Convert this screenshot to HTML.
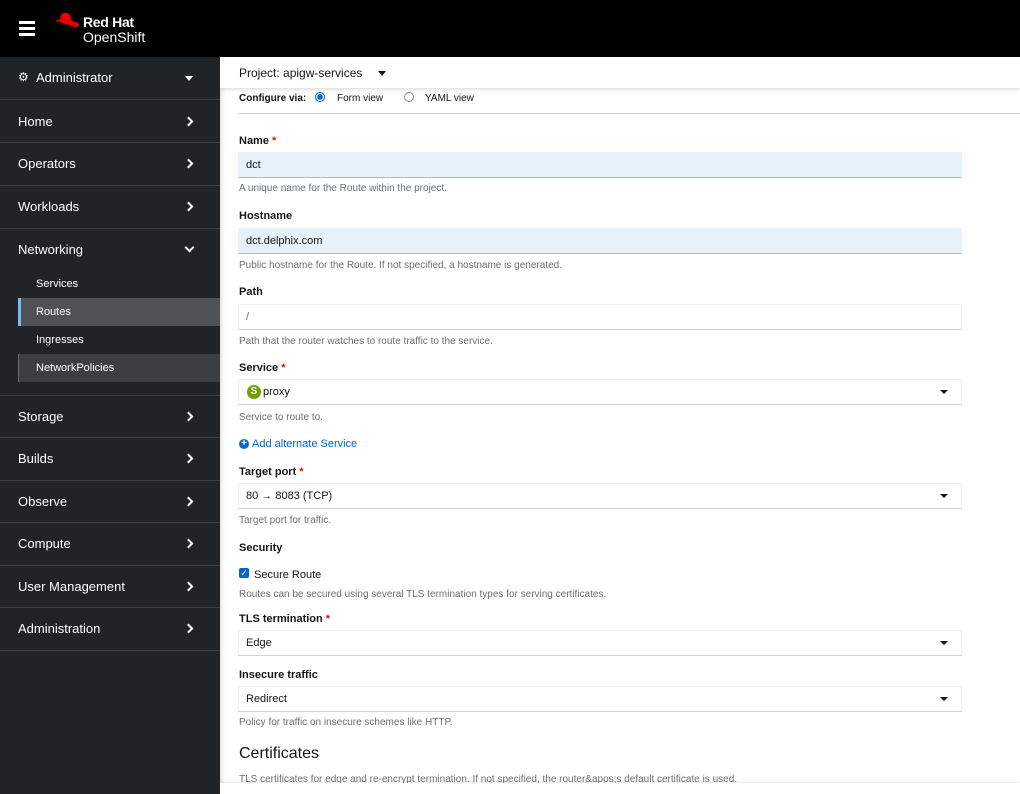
<!DOCTYPE html>
<html><head><meta charset="utf-8"><style>
*{box-sizing:border-box;margin:0;padding:0}
body{width:1020px;height:794px;overflow:hidden;font-family:"Liberation Sans",sans-serif;background:#fff;position:relative;color:#151515}
.top{position:absolute;left:0;top:0;width:1020px;height:57px;background:#000}
.side{position:absolute;left:0;top:57px;width:220px;height:737px;background:#212427}
.nav{position:absolute;left:0;width:220px;color:#fff;font-size:13px}
.nav span{position:absolute;left:18px}
.sep{position:absolute;left:0;width:220px;height:1px;background:#3c3f42}
.chev{position:absolute;left:185px;width:7px;height:7px;border-right:2px solid #fff;border-top:2px solid #fff;transform:rotate(45deg)}
.sub{position:absolute;left:18px;width:202px;height:28px;color:#fff;font-size:11px;line-height:28px;padding-left:18px}
.main{position:absolute;left:220px;top:57px;width:800px;height:737px;background:#fff;box-shadow:inset 4px 0 4px -2px rgba(0,0,0,.12)}
.t{position:absolute;font-size:11px}
.lbl{position:absolute;left:239px;font-size:11px;font-weight:bold}
.req{color:#c9190b}
.help{position:absolute;left:239px;font-size:10px;color:#6a6e73}
.in{position:absolute;left:238px;width:724px;height:26px;border:1px solid #f0f0f0;border-bottom-color:#d2d2d2;font-size:11px;line-height:24px;padding-left:7px}
.caret{position:absolute;right:13px;top:10px;border-left:4px solid transparent;border-right:4px solid transparent;border-top:4px solid #151515}
</style></head><body>
<div class="top">
  <div style="position:absolute;left:19px;top:21px;width:16px;height:3px;background:#fff;box-shadow:0 6px 0 #fff,0 12px 0 #fff"></div>
  <svg style="position:absolute;left:54px;top:12px" width="27" height="20" viewBox="0 0 27 20"><path d="M7 3C9 0 14 0 16 3L18 9C22 10 25 11 25 13C25 15 20 16 14 14C8 12 2 11 2 9C2 8 4 7 6 8L7 3Z" fill="#e00"/><path d="M3 9C6 11 14 14 20 14" stroke="#000" stroke-width="1.2" fill="none"/></svg>
  <div style="position:absolute;left:83px;top:14px;color:#fff;font-size:14px;font-weight:bold;letter-spacing:-.3px">Red Hat</div>
  <div style="position:absolute;left:83px;top:29px;color:#fff;font-size:14px">OpenShift</div>
</div>
<div class="side"></div>
<div class="nav" style="top:70px"><span style="left:18px;font-size:12px">⚙</span><span style="left:36px">Administrator</span><div style="position:absolute;left:185px;top:6px;border-left:4px solid transparent;border-right:4px solid transparent;border-top:5px solid #fff"></div></div>
<div class="sep" style="top:99px"></div>
<div class="nav" style="top:114px"><span>Home</span><div class="chev" style="top:4px"></div></div>
<div class="sep" style="top:142px"></div>
<div class="nav" style="top:156px"><span>Operators</span><div class="chev" style="top:4px"></div></div>
<div class="sep" style="top:185px"></div>
<div class="nav" style="top:199px"><span>Workloads</span><div class="chev" style="top:4px"></div></div>
<div class="sep" style="top:228px"></div>
<div class="nav" style="top:242px"><span>Networking</span><div class="chev" style="top:2px;left:186px;transform:rotate(135deg)"></div></div>
<div class="sub" style="top:270px">Services</div>
<div class="sub" style="top:298px;background:#4f5255;border-left:3px solid #73bcf7;padding-left:15px">Routes</div>
<div class="sub" style="top:326px">Ingresses</div>
<div class="sub" style="top:354px;background:#3c3f42;border-left:1px solid #6a6e73;padding-left:17px">NetworkPolicies</div>
<div class="sep" style="top:395px"></div>
<div class="nav" style="top:409px"><span>Storage</span><div class="chev" style="top:4px"></div></div>
<div class="sep" style="top:437px"></div>
<div class="nav" style="top:451px"><span>Builds</span><div class="chev" style="top:4px"></div></div>
<div class="sep" style="top:480px"></div>
<div class="nav" style="top:494px"><span>Observe</span><div class="chev" style="top:4px"></div></div>
<div class="sep" style="top:522px"></div>
<div class="nav" style="top:536px"><span>Compute</span><div class="chev" style="top:4px"></div></div>
<div class="sep" style="top:565px"></div>
<div class="nav" style="top:579px"><span>User Management</span><div class="chev" style="top:4px"></div></div>
<div class="sep" style="top:607px"></div>
<div class="nav" style="top:621px"><span>Administration</span><div class="chev" style="top:4px"></div></div>
<div class="sep" style="top:650px"></div>

<div class="main"></div>
<div style="position:absolute;left:220px;top:57px;width:800px;height:31px;background:#fff;box-shadow:0 2px 3px rgba(0,0,0,.12)"></div>
<div class="t" style="left:239px;top:66px;font-size:12px">Project: apigw-services</div>
<div style="position:absolute;left:378px;top:71px;border-left:4px solid transparent;border-right:4px solid transparent;border-top:5px solid #151515"></div>
<div class="t" style="left:239px;top:93px;font-size:10px;font-weight:bold">Configure via:</div>
<div style="position:absolute;left:315px;top:92px;width:10px;height:10px;border-radius:50%;border:1px solid #06c;background:radial-gradient(#06c 2.5px,#fff 3px)"></div>
<div class="t" style="left:337px;top:93px;font-size:10px">Form view</div>
<div style="position:absolute;left:404px;top:92px;width:10px;height:10px;border-radius:50%;border:1px solid #8a8d90"></div>
<div class="t" style="left:425px;top:93px;font-size:10px">YAML view</div>
<div style="position:absolute;left:238px;top:113px;width:782px;height:1px;background:#d2d2d2"></div>

<div class="lbl" style="top:135px">Name <span class="req">*</span></div>
<div class="in" style="top:152px;background:#e7f1fa;border-color:#e7f1fa;border-bottom-color:#b8bbbe">dct</div>
<div class="help" style="top:183px">A unique name for the Route within the project.</div>
<div class="lbl" style="top:210px">Hostname</div>
<div class="in" style="top:228px;background:#e7f1fa;border-color:#e7f1fa;border-bottom-color:#b8bbbe">dct.delphix.com</div>
<div class="help" style="top:260px">Public hostname for the Route. If not specified, a hostname is generated.</div>
<div class="lbl" style="top:286px">Path</div>
<div class="in" style="top:304px;color:#6a6e73">/</div>
<div class="help" style="top:336px">Path that the router watches to route traffic to the service.</div>
<div class="lbl" style="top:362px">Service <span class="req">*</span></div>
<div class="in" style="top:379px;padding-left:24px"><div style="position:absolute;left:8px;top:5px;width:14px;height:14px;border-radius:50%;background:#6ca100;color:#fff;font-size:10px;line-height:14px;text-align:center;font-weight:bold">S</div>proxy<div class="caret"></div></div>
<div class="help" style="top:412px">Service to route to.</div>
<div style="position:absolute;left:239px;top:439px;width:10px;height:10px;border-radius:50%;background:#06c;color:#fff;font-size:10px;line-height:10px;text-align:center;font-weight:bold">+</div>
<div class="t" style="left:252px;top:438px;color:#06c">Add alternate Service</div>
<div class="lbl" style="top:466px">Target port <span class="req">*</span></div>
<div class="in" style="top:483px">80 → 8083 (TCP)<div class="caret"></div></div>
<div class="help" style="top:515px">Target port for traffic.</div>
<div class="lbl" style="top:542px">Security</div>
<div style="position:absolute;left:239px;top:568px;width:10px;height:10px;background:#06c;border-radius:2px;color:#fff;font-size:9px;line-height:10px;text-align:center">✓</div>
<div class="t" style="left:254px;top:569px">Secure Route</div>
<div class="help" style="top:589px">Routes can be secured using several TLS termination types for serving certificates.</div>
<div class="lbl" style="top:613px">TLS termination <span class="req">*</span></div>
<div class="in" style="top:630px">Edge<div class="caret"></div></div>
<div class="lbl" style="top:669px">Insecure traffic</div>
<div class="in" style="top:686px">Redirect<div class="caret"></div></div>
<div class="help" style="top:717px">Policy for traffic on insecure schemes like HTTP.</div>
<div class="t" style="left:239px;top:745px;font-size:16px">Certificates</div>
<div class="help" style="top:774px">TLS certificates for edge and re-encrypt termination. If not specified, the router&amp;apos;s default certificate is used.</div>
<div style="position:absolute;left:220px;top:783px;width:800px;height:11px;background:#fff;box-shadow:0 -1px 2px rgba(0,0,0,.1)"></div>
</body></html>
